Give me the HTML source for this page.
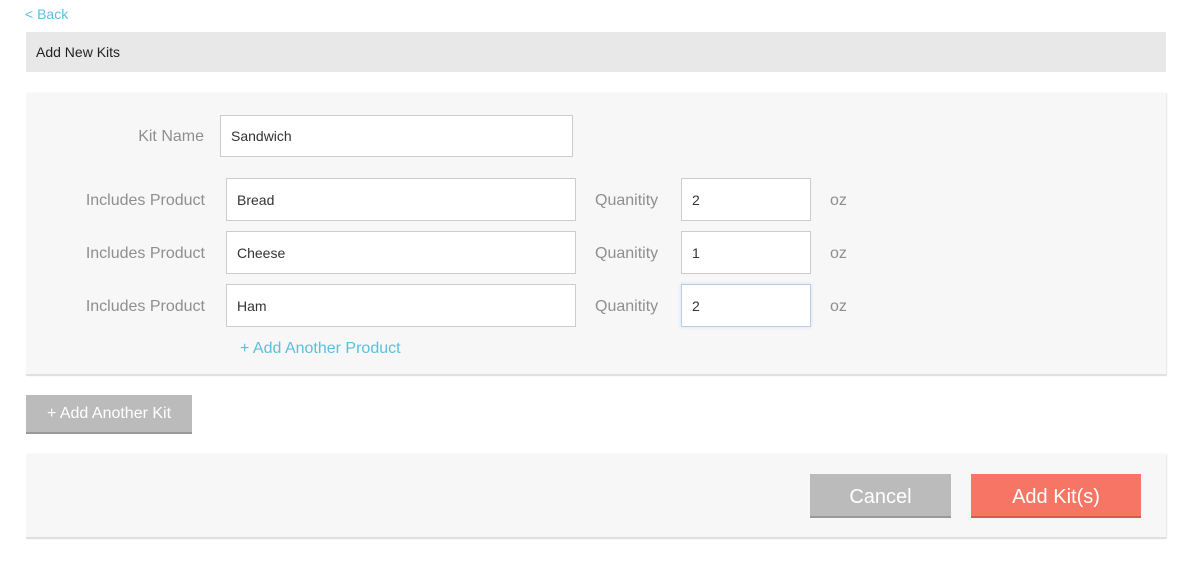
<!DOCTYPE html>
<html><head><meta charset="utf-8"><style>
*{box-sizing:border-box;margin:0;padding:0}
body{width:1188px;height:561px;background:#fff;font-family:"Liberation Sans",sans-serif;position:relative;overflow:hidden}
.a{position:absolute}
.lbl{position:absolute;color:#8f8f8f;font-size:16px;line-height:20px}
.inp{position:absolute;background:#fff;border:1px solid #ccc;font-size:14px;color:#333;padding-left:10px;display:flex;align-items:center}
.btn{position:absolute;color:#fff;display:flex;align-items:center;justify-content:center}
</style></head><body>
<div class="a" style="left:25px;top:6px;font-size:14px;color:#5bc0de">&lt; Back</div>
<div class="a" style="left:26px;top:32px;width:1140px;height:40px;background:#e8e8e8;font-size:14px;color:#222;padding:12px 0 0 10px">Add New Kits</div>

<div class="a" style="left:26px;top:93px;width:1140px;height:283px;background:#f7f7f7;border-bottom:2px solid #e0e0e0;box-shadow:1px 0 1px #e6e6e6"></div>
<div class="lbl" style="left:0;width:204px;text-align:right;top:127px">Kit Name</div>
<div class="inp" style="left:220px;top:115px;width:353px;height:42px">Sandwich</div>

<div class="lbl" style="left:0;width:205px;text-align:right;top:191px">Includes Product</div>
<div class="inp" style="left:226px;top:178px;width:350px;height:43px">Bread</div>
<div class="lbl" style="left:595px;top:191px">Quanitity</div>
<div class="inp" style="left:681px;top:178px;width:130px;height:43px">2</div>
<div class="lbl" style="left:830px;top:191px">oz</div>

<div class="lbl" style="left:0;width:205px;text-align:right;top:244px">Includes Product</div>
<div class="inp" style="left:226px;top:231px;width:350px;height:43px">Cheese</div>
<div class="lbl" style="left:595px;top:244px">Quanitity</div>
<div class="inp" style="left:681px;top:231px;width:130px;height:43px">1</div>
<div class="lbl" style="left:830px;top:244px">oz</div>

<div class="lbl" style="left:0;width:205px;text-align:right;top:297px">Includes Product</div>
<div class="inp" style="left:226px;top:284px;width:350px;height:43px">Ham</div>
<div class="lbl" style="left:595px;top:297px">Quanitity</div>
<div class="inp" style="left:681px;top:284px;width:130px;height:43px;border-color:#b9cde3;box-shadow:0 0 4px #cfe0f2">2</div>
<div class="lbl" style="left:830px;top:297px">oz</div>

<div class="a" style="left:240px;top:340px;font-size:16px;color:#5bc0de">+ Add Another Product</div>

<div class="btn" style="left:26px;top:395px;width:166px;height:39px;background:#bbb;border-bottom:2px solid #999;font-size:16px">+ Add Another Kit</div>

<div class="a" style="left:26px;top:454px;width:1140px;height:85px;background:#f7f7f7;border-bottom:2px solid #e0e0e0;box-shadow:1px 0 1px #e6e6e6"></div>
<div class="btn" style="left:810px;top:474px;width:141px;height:44px;background:#bbb;border-bottom:2px solid #999;font-size:20px;padding-top:4px;font-weight:500">Cancel</div>
<div class="btn" style="left:971px;top:474px;width:170px;height:44px;background:#f67565;border-bottom:2px solid #d9594b;font-size:20px;padding-top:4px">Add Kit(s)</div>
</body></html>
